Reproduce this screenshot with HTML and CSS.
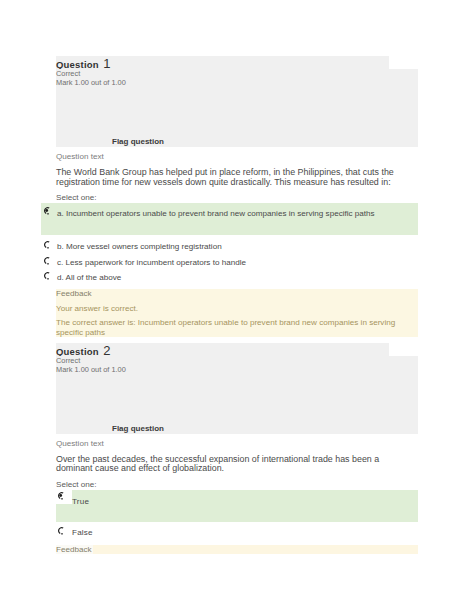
FILE: index.html
```html
<!DOCTYPE html>
<html>
<head>
<meta charset="utf-8">
<link rel="stylesheet" href="styles.css">
</head>
<body>
<div class="page">
  <div class="q">
    <div class="info">
      <div class="qno"><span class="qword">Question</span> <span class="qnum">1</span></div>
      <div class="info-body">
        <div class="state">Correct</div>
        <div class="grade">Mark 1.00 out of 1.00</div>
        <div class="flag">Flag question</div>
      </div>
    </div>
    <div class="qlabel">Question text</div>
    <div class="qtext">The World Bank Group has helped put in place reform, in the Philippines, that cuts the registration time for new vessels down quite drastically. This measure has resulted in:</div>
    <div class="select">Select one:</div>
    <div class="opts outer">
      <div class="opt correct">
        <svg class="radio" viewBox="0 0 8 9"><path d="M6.2 2 A3 3 0 1 0 3.2 7.4" /><rect x="4.3" y="7.1" width="1.4" height="1.4"/><circle cx="3.7" cy="4.5" r="1.4" class="dot"/></svg>
        <span>a. Incumbent operators unable to prevent brand new companies in serving specific paths</span>
      </div>
      <div class="opt plain">
        <svg class="radio" viewBox="0 0 8 9"><path d="M6.2 2 A3 3 0 1 0 3.2 7.4" /><rect x="4.3" y="7.1" width="1.4" height="1.4"/></svg>
        <span>b. More vessel owners completing registration</span>
      </div>
      <div class="opt plain">
        <svg class="radio" viewBox="0 0 8 9"><path d="M6.2 2 A3 3 0 1 0 3.2 7.4" /><rect x="4.3" y="7.1" width="1.4" height="1.4"/></svg>
        <span>c. Less paperwork for incumbent operators to handle</span>
      </div>
      <div class="opt plain">
        <svg class="radio" viewBox="0 0 8 9"><path d="M6.2 2 A3 3 0 1 0 3.2 7.4" /><rect x="4.3" y="7.1" width="1.4" height="1.4"/></svg>
        <span>d. All of the above</span>
      </div>
    </div>
    <div class="feedback">
      <div class="fb-title">Feedback</div>
      <div class="fb-line">Your answer is correct.</div>
      <div class="fb-answer">The correct answer is: Incumbent operators unable to prevent brand new companies in serving specific paths</div>
    </div>
  </div>

  <div class="q q2">
    <div class="info">
      <div class="qno"><span class="qword">Question</span> <span class="qnum">2</span></div>
      <div class="info-body">
        <div class="state">Correct</div>
        <div class="grade">Mark 1.00 out of 1.00</div>
        <div class="flag">Flag question</div>
      </div>
    </div>
    <div class="qlabel">Question text</div>
    <div class="qtext">Over the past decades, the successful expansion of international trade has been a dominant cause and effect of globalization.</div>
    <div class="select">Select one:</div>
    <div class="opts inner">
      <div class="tf correct">
        <span class="rbox"><svg class="radio" viewBox="0 0 8 9"><path d="M6.2 2 A3 3 0 1 0 3.2 7.4" /><rect x="4.3" y="7.1" width="1.4" height="1.4"/><circle cx="3.7" cy="4.5" r="1.4" class="dot"/></svg></span>
        <span class="tf-text">True</span>
      </div>
      <div class="tf plain">
        <span class="rbox"><svg class="radio" viewBox="0 0 8 9"><path d="M6.2 2 A3 3 0 1 0 3.2 7.4" /><rect x="4.3" y="7.1" width="1.4" height="1.4"/></svg></span>
        <span class="tf-text">False</span>
      </div>
    </div>
    <div class="feedback short">
      <div class="fb-title">Feedback</div>
    </div>
  </div>
</div>
</body>
</html>
```

FILE: styles.css
```css
html, body {
  margin: 0;
  padding: 0;
  background: #ffffff;
}
body {
  font-family: "Liberation Sans", Arial, sans-serif;
  color: #555;
}
.page {
  padding: 56px 56px 0 56px;
  width: 362px;
}
.info {
  display: flex;
  flex-direction: column;
}
.qno {
  width: 333px;
  height: 13px;
  background: #f0f0f0;
  color: #333;
  line-height: 14px;
  white-space: nowrap;
}
.qword {
  font-weight: bold;
  font-size: 9.5px;
  letter-spacing: 0.2px;
}
.qnum {
  font-size: 13px;
  color: #333;
}
.info-body {
  background: #f0f0f0;
  height: 78px;
  display: flex;
  flex-direction: column;
}
.state, .grade {
  font-size: 7.4px;
  line-height: 9px;
  color: #6f6f6f;
}
.flag {
  margin-top: auto;
  padding-left: 56px;
  font-size: 8px;
  font-weight: bold;
  line-height: 9px;
  padding-bottom: 1px;
  color: #3a3a3a;
}
.qlabel {
  margin-top: 5px;
  font-size: 8.1px;
  line-height: 10px;
  color: #7d7d7d;
}
.qtext {
  margin-top: 6px;
  font-size: 8.9px;
  line-height: 9.5px;
  color: #4a4a4a;
}
.select {
  margin-top: 6px;
  font-size: 8.1px;
  line-height: 10px;
  color: #5a5a5a;
}
.opts.outer {
  margin-left: -15px;
}
.opt {
  display: flex;
  align-items: flex-start;
  font-size: 8.1px;
  color: #4a4a4a;
}
.opt .radio {
  width: 8px;
  height: 9px;
  margin-left: 1.5px;
  margin-right: 6.5px;
  flex: none;
}
.opt.correct {
  background: #dfeed6;
  height: 32px;
  padding-top: 3px;
  box-sizing: border-box;
}
.opt.correct span {
  line-height: 11px;
  margin-top: 2px;
}
.opt.plain {
  height: 15.5px;
  align-items: center;
}
.opt.plain .radio {
  margin-top: -4px;
}
.opt.correct + .opt.plain {
  margin-top: 4px;
}
.radio path {
  fill: none;
  stroke: #1e1e1e;
  stroke-width: 1.2;
}
.radio rect, .radio .dot {
  fill: #1e1e1e;
}
.feedback {
  margin-top: 3px;
  background: #fcf7e2;
  height: 48px;
  color: #a6945e;
}
.fb-title {
  font-size: 8.1px;
  line-height: 10px;
  color: #85806a;
}
.fb-line {
  margin-top: 5px;
  font-size: 8.1px;
  line-height: 10px;
}
.fb-answer {
  margin-top: 4px;
  font-size: 8.1px;
  line-height: 10px;
}
.q2 {
  margin-top: 6px;
}
.tf {
  display: flex;
  align-items: flex-start;
  font-size: 8.1px;
  color: #4a4a4a;
}
.tf .rbox {
  width: 16px;
  height: 14px;
  flex: none;
  display: flex;
  align-items: flex-start;
}
.tf .radio {
  width: 8px;
  height: 9px;
  margin-left: 0.5px;
  margin-top: 1px;
}
.tf.correct {
  background: #dfeed6;
  height: 32px;
}
.tf.correct .rbox {
  background: #ffffff;
}
.tf-text {
  line-height: 10px;
  margin-top: 7px;
  letter-spacing: 0.2px;
}
.tf.plain {
  height: 20px;
}
.tf.plain .radio {
  margin-top: 4px;
}
.tf.plain .tf-text {
  margin-top: 6px;
}
.feedback.short {
  height: 9px;
  margin-top: 3px;
  background: linear-gradient(to right, #fbfaf5 0, #fbfaf5 37px, #fdf6e1 37px);
}
.feedback.short .fb-title {
  line-height: 9px;
}
```
